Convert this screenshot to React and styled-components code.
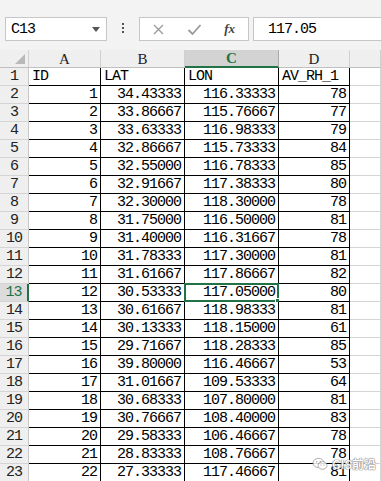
import React from 'react';
import styled, { createGlobalStyle } from 'styled-components';

const GlobalStyle = createGlobalStyle`
    html, body {
        margin : 0;
        padding : 0;
        background : #ffffff;
        overflow : hidden;
    }
`;

const GREEN = '#217346';
const MONO = `"Liberation Mono", "DejaVu Sans Mono", "Noto Sans CJK SC", monospace`;

const Page = styled.div`
    position : relative;
    width : 381px;
    height : 481px;
    overflow : hidden;
    font-family : ${MONO};
    color : #000;
`;

const Toolbar = styled.div`
    display : flex;
    align-items : flex-start;
    height : 50px;
    padding : 17px 0 0 5px;
    box-sizing : border-box;
    background : #f3f3f3;
`;

const NameBox = styled.div`
    display : flex;
    align-items : center;
    justify-content : space-between;
    width : 102px;
    height : 24px;
    box-sizing : border-box;
    border : 1px solid #c6c6c6;
    background : #fff;
    padding : 0 6px 0 5px;
    font-size : 15px;
    letter-spacing : -1px;
`;

const Caret = styled.span`
    width : 0;
    height : 0;
    border-left : 4px solid transparent;
    border-right : 4px solid transparent;
    border-top : 5px solid #555;
`;

const Dots = styled.div`
    display : flex;
    flex-direction : column;
    gap : 2px;
    width : 3px;
    margin : 6px 14px 0 15px;

    span {
        width : 2px;
        height : 2px;
        background : #555;
    }
`;

const IconBox = styled.div`
    display : flex;
    align-items : center;
    justify-content : space-between;
    width : 110px;
    height : 24px;
    box-sizing : border-box;
    border : 1px solid #c6c6c6;
    background : #fff;
    padding : 0 13px 0 12px;
`;

const Fx = styled.span`
    font-family : "Liberation Serif", serif;
    font-style : italic;
    font-weight : bold;
    font-size : 13px;
    color : #444;
`;

const FormulaBox = styled.div`
    flex : 1;
    height : 24px;
    margin-left : 4px;
    box-sizing : border-box;
    border : 1px solid #c6c6c6;
    border-right : none;
    background : #fff;
    padding-left : 14px;
    display : flex;
    align-items : center;
    font-size : 15px;
    letter-spacing : -1px;
`;

const Sheet = styled.div`
    display : grid;
    grid-template-columns : 29px 72px 84px 94px 71px 1fr;
    grid-auto-rows : 18px;
`;

const Cell = styled.div`
    position : relative;
    display : flex;
    align-items : flex-end;
    justify-content : ${p => (p.$left ? 'flex-start' : 'flex-end')};
    box-sizing : border-box;
    padding : 0 3px 0 3px;
    font-size : 15px;
    letter-spacing : -1px;
    line-height : 16px;
    white-space : nowrap;
    border-right : 1px solid ${p => (p.$ruled ? '#000' : '#d4d4d4')};
    border-bottom : 1px solid ${p => (p.$ruled ? '#000' : '#d4d4d4')};
    background : #fff;
`;

const ColHead = styled.div`
    display : flex;
    align-items : flex-end;
    justify-content : center;
    box-sizing : border-box;
    font-family : "Liberation Serif", "DejaVu Serif", serif;
    font-size : 15px;
    line-height : 16px;
    color : ${p => (p.$active ? GREEN : '#222')};
    font-weight : ${p => (p.$active ? 'bold' : 'normal')};
    background : ${p => (p.$active ? '#d3d3d3' : '#efefef')};
    border-right : 1px solid ${p => (p.$active ? '#ababab' : '#d0d0d0')};
    border-bottom : ${p => (p.$active ? `2px solid ${GREEN}` : '1px solid #c0c0c0')};
`;

const Corner = styled.div`
    position : relative;
    box-sizing : border-box;
    background : #efefef;
    border-right : 1px solid #d0d0d0;
    border-bottom : 1px solid #c0c0c0;

    &::after {
        content : '';
        position : absolute;
        right : 3px;
        bottom : 3px;
        width : 0;
        height : 0;
        border-left : 10px solid transparent;
        border-bottom : 10px solid #b9b9b9;
    }
`;

const RowHead = styled.div`
    display : flex;
    align-items : flex-end;
    justify-content : center;
    box-sizing : border-box;
    font-size : 15px;
    letter-spacing : -1px;
    line-height : 16px;
    color : ${p => (p.$active ? GREEN : '#222')};
    background : ${p => (p.$active ? '#dcdcdc' : '#efefef')};
    border-right : ${p => (p.$active ? `2px solid ${GREEN}` : '1px solid #c8c8c8')};
    border-bottom : 1px solid #d4d4d4;
`;

const Selection = styled.div`
    position : absolute;
    top : -1px;
    left : -1px;
    width : calc(100% + 2px);
    height : calc(100% + 2px);
    box-sizing : border-box;
    border : 2px solid ${GREEN};
    pointer-events : none;

    &::after {
        content : '';
        position : absolute;
        right : -5px;
        bottom : -5px;
        width : 5px;
        height : 5px;
        background : ${GREEN};
        border : 1px solid #fff;
    }
`;

const Watermark = styled.div`
    position : absolute;
    left : 312px;
    top : 455px;
    display : flex;
    align-items : center;
    gap : 4px;
    opacity : 0.85;
    font-family : "Noto Sans CJK SC", "Noto Sans", sans-serif;
    font-size : 12px;
    font-weight : bold;
    color : #fff;
    text-shadow : 0 0 1px #666, 0 0 1px #666, 0 0 1px #666;
`;

const data = [
    [1, '34.43333', '116.33333', 78],
    [2, '33.86667', '115.76667', 77],
    [3, '33.63333', '116.98333', 79],
    [4, '32.86667', '115.73333', 84],
    [5, '32.55000', '116.78333', 85],
    [6, '32.91667', '117.38333', 80],
    [7, '32.30000', '118.30000', 78],
    [8, '31.75000', '116.50000', 81],
    [9, '31.40000', '116.31667', 78],
    [10, '31.78333', '117.30000', 81],
    [11, '31.61667', '117.86667', 82],
    [12, '30.53333', '117.05000', 80],
    [13, '30.61667', '118.98333', 81],
    [14, '30.13333', '118.15000', 61],
    [15, '29.71667', '118.28333', 85],
    [16, '39.80000', '116.46667', 53],
    [17, '31.01667', '109.53333', 64],
    [18, '30.68333', '107.80000', 81],
    [19, '30.76667', '108.40000', 83],
    [20, '29.58333', '106.46667', 78],
    [21, '28.83333', '108.76667', 78],
    [22, '27.33333', '117.46667', 81],
];

const Cross = () => (
    <svg width="13" height="13" viewBox="0 0 13 13">
        <path d="M2 2 L11 11 M11 2 L2 11" stroke="#9a9a9a" strokeWidth="1.3" fill="none" />
    </svg>
);

const Check = () => (
    <svg width="15" height="13" viewBox="0 0 15 13">
        <path d="M1.5 7 L5.5 11 L13.5 2" stroke="#9a9a9a" strokeWidth="1.8" fill="none" />
    </svg>
);

const Wechat = () => (
    <svg width="16" height="14" viewBox="0 0 16 14">
        <ellipse cx="6.5" cy="6" rx="5.5" ry="4.6" fill="#fff" stroke="#888" strokeWidth="0.8" />
        <ellipse cx="10.5" cy="8.5" rx="4.5" ry="3.8" fill="#fff" stroke="#888" strokeWidth="0.8" />
        <circle cx="4.7" cy="4.8" r="0.7" fill="#888" />
        <circle cx="8.3" cy="4.8" r="0.7" fill="#888" />
        <circle cx="9" cy="8" r="0.6" fill="#888" />
        <circle cx="12" cy="8" r="0.6" fill="#888" />
    </svg>
);

const App = () => {
    return (
        <Page>
            <GlobalStyle />
            <Toolbar>
                <NameBox>
                    C13
                    <Caret />
                </NameBox>
                <Dots>
                    <span />
                    <span />
                    <span />
                </Dots>
                <IconBox>
                    <Cross />
                    <Check />
                    <Fx>fx</Fx>
                </IconBox>
                <FormulaBox>117.05</FormulaBox>
            </Toolbar>
            <Sheet>
                <Corner />
                <ColHead>A</ColHead>
                <ColHead>B</ColHead>
                <ColHead $active>C</ColHead>
                <ColHead>D</ColHead>
                <ColHead />

                <RowHead>1</RowHead>
                <Cell $left $ruled>ID</Cell>
                <Cell $left $ruled>LAT</Cell>
                <Cell $left $ruled>LON</Cell>
                <Cell $left $ruled>AV_RH_1</Cell>
                <Cell />

                {data.map((row, i) => {
                    const n = i + 2;
                    const active = n === 13;
                    return (
                        <React.Fragment key={n}>
                            <RowHead $active={active}>{n}</RowHead>
                            <Cell $ruled>{row[0]}</Cell>
                            <Cell $ruled>{row[1]}</Cell>
                            <Cell $ruled>
                                {row[2]}
                                {active && <Selection />}
                            </Cell>
                            <Cell $ruled>{row[3]}</Cell>
                            <Cell />
                        </React.Fragment>
                    );
                })}
            </Sheet>
            <Watermark>
                <Wechat />
                GIS前沿
            </Watermark>
        </Page>
    );
};

export default App;
